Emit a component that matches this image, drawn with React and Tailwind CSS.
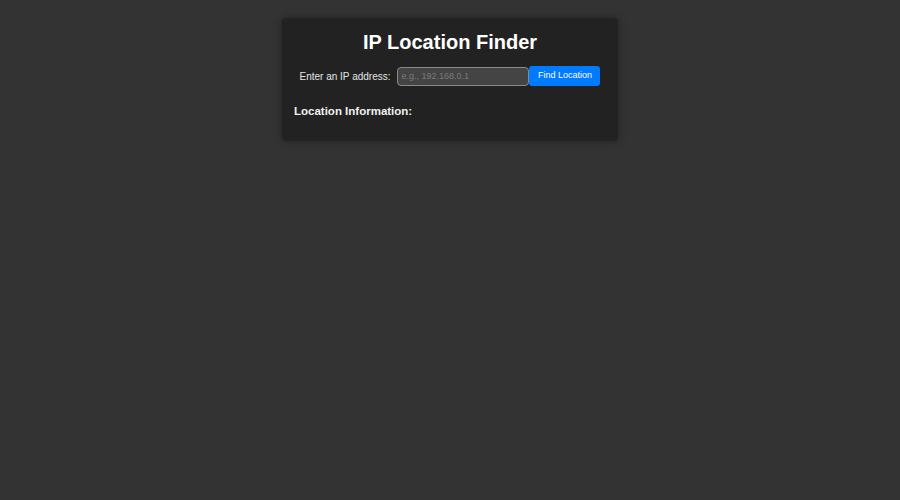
export default function App() {
  return (
    <div className="min-h-screen w-full bg-[#333333] pt-[18px] font-['Liberation_Sans',Arial,sans-serif] text-white">
      <div className="mx-auto w-[336px] rounded bg-[#222222] px-3 pt-3 pb-[23px] shadow-[0_0_8px_rgba(0,0,0,0.35)]">
        <h1 className="text-center text-[20px] font-bold leading-[24px]">IP Location Finder</h1>
        <div className="mt-3 flex items-center justify-center">
          <label htmlFor="ip" className="mr-[7px] text-[10px] text-[#e5e5e5]">
            Enter an IP address:
          </label>
          <input
            id="ip"
            type="text"
            placeholder="e.g., 192.168.0.1"
            className="h-[19px] w-[132px] rounded-sm border border-[#8a8a8a] bg-[#444444] px-[3px] text-[9px] text-white outline-none placeholder:text-[#7a7a7a]"
          />
          <button className="h-[20px] w-[71px] rounded-[3px] bg-[#007bff] text-[9px] text-white">
            Find Location
          </button>
        </div>
        <h2 className="mt-[18px] text-[11.5px] font-bold leading-[14px] text-[#f0f0f0]">Location Information:</h2>
      </div>
    </div>
  );
}
